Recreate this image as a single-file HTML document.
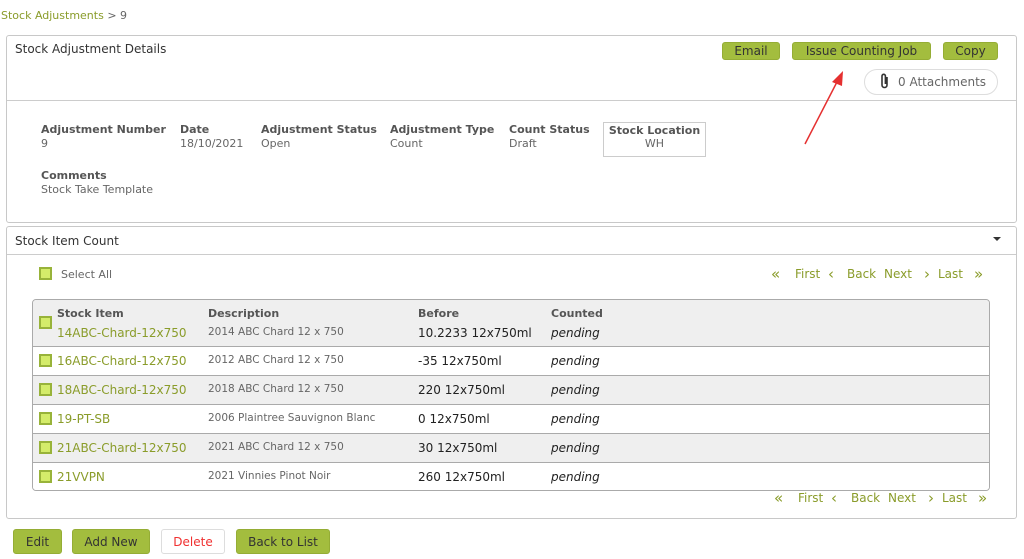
<!DOCTYPE html>
<html><head><style>
*{margin:0;padding:0;box-sizing:border-box}
body{width:1024px;height:559px;background:#fff;font-family:"DejaVu Sans","Liberation Sans",sans-serif;color:#555;position:relative;overflow:hidden}
.a{position:absolute;white-space:nowrap}
.panel{position:absolute;border:1px solid #c8c8c8;border-radius:3px;background:#fff}
.btn{position:absolute;background:#a3bd3e;border:1px solid #95ad35;border-radius:3px;color:#333;font-size:12px;text-align:center}
.lbl{font-size:11px;font-weight:bold;color:#555}
.val{font-size:11px;color:#666}
.cb{position:absolute;width:13px;height:13px;background:#d4ec6a;border:2px solid #98b33a}
.row{position:absolute;left:0;width:956px;height:29px;border-top:1px solid #aaa}
.it{font-size:12px;color:#8a9c2a}
.ds{font-size:10.5px;color:#666}
.bf{font-size:12px;color:#222}
.ct{font-size:12px;color:#222;font-style:italic}
.pg{position:absolute;font-size:12px;color:#8a9c2a;white-space:nowrap}
.ch{font-size:15px;line-height:12px}
</style></head><body>
<div class="a" style="left:1px;top:9px;font-size:11px;color:#8a9c2a">Stock Adjustments <span style="color:#666">&gt; 9</span></div>

<div class="panel" style="left:6px;top:35px;width:1011px;height:188px">
 <div class="a" style="left:8px;top:6px;font-size:12px;color:#333">Stock Adjustment Details</div>
 <div style="position:absolute;left:0;top:64px;width:100%;border-top:1px solid #ccc"></div>
</div>
<div class="btn" style="left:722px;top:42px;width:58px;height:18px;line-height:16px">Email</div>
<div class="btn" style="left:792px;top:42px;width:139px;height:18px;line-height:16px">Issue Counting Job</div>
<div class="btn" style="left:943px;top:42px;width:55px;height:18px;line-height:16px">Copy</div>
<div class="a" style="left:864px;top:69px;width:134px;height:26px;border:1px solid #ddd;border-radius:13px;font-size:12px;color:#666;line-height:24px;padding-left:33px">0 Attachments</div>
<svg class="a" style="left:878px;top:72px" width="14" height="18" viewBox="0 0 14 18"><path d="M9 5v8a2.5 2.5 0 0 1-5 0V4a1.7 1.7 0 0 1 3.4 0v8" fill="none" stroke="#333" stroke-width="1.6"/></svg>

<div class="a lbl" style="left:41px;top:123px">Adjustment Number</div><div class="a val" style="left:41px;top:137px">9</div>
<div class="a lbl" style="left:180px;top:123px">Date</div><div class="a val" style="left:180px;top:137px">18/10/2021</div>
<div class="a lbl" style="left:261px;top:123px">Adjustment Status</div><div class="a val" style="left:261px;top:137px">Open</div>
<div class="a lbl" style="left:390px;top:123px">Adjustment Type</div><div class="a val" style="left:390px;top:137px">Count</div>
<div class="a lbl" style="left:509px;top:123px">Count Status</div><div class="a val" style="left:509px;top:137px">Draft</div>
<div class="a" style="left:603px;top:122px;width:103px;height:35px;border:1px solid #ccc;text-align:center;padding-top:1px"><div class="lbl">Stock Location</div><div class="val">WH</div></div>
<div class="a lbl" style="left:41px;top:169px">Comments</div><div class="a val" style="left:41px;top:183px">Stock Take Template</div>

<svg class="a" style="left:800px;top:68px" width="50" height="80"><line x1="5" y1="76" x2="38" y2="12" stroke="#e53030" stroke-width="1.5"/><path d="M43 3 L32 14 L42 18 Z" fill="#e53030"/></svg>

<div class="panel" style="left:6px;top:226px;width:1011px;height:293px">
 <div class="a" style="left:8px;top:7px;font-size:12px;color:#333">Stock Item Count</div>
 <div class="a" style="left:986px;top:10px;width:0;height:0;border-left:4px solid transparent;border-right:4px solid transparent;border-top:4px solid #333"></div>
 <div style="position:absolute;left:0;top:27px;width:100%;border-top:1px solid #ccc"></div>
</div>
<div class="cb" style="left:39px;top:267px"></div>
<div class="a" style="left:61px;top:268px;font-size:11px;color:#666">Select All</div>

<div class="pg ch" style="left:771px;top:268px">«</div><div class="pg" style="left:795px;top:267px">First</div><div class="pg ch" style="left:828px;top:268px">‹</div><div class="pg" style="left:847px;top:267px">Back</div><div class="pg" style="left:884px;top:267px">Next</div><div class="pg ch" style="left:924px;top:268px">›</div><div class="pg" style="left:938px;top:267px">Last</div><div class="pg ch" style="left:974px;top:268px">»</div>

<div class="a" style="left:32px;top:299px;width:958px;height:192px;border:1px solid #aaa;border-radius:4px;overflow:hidden;background:#fff">
 <div class="row" style="top:0;height:47px;border-top:none;background:#efefef">
  <div class="a lbl" style="left:24px;top:7px">Stock Item</div>
  <div class="a lbl" style="left:175px;top:7px">Description</div>
  <div class="a lbl" style="left:385px;top:7px">Before</div>
  <div class="a lbl" style="left:518px;top:7px">Counted</div>
  <div class="cb" style="left:6px;top:16px"></div>
  <div class="a it" style="left:24px;top:26px">14ABC-Chard-12x750</div>
  <div class="a ds" style="left:175px;top:26px">2014 ABC Chard 12 x 750</div>
  <div class="a bf" style="left:385px;top:26px">10.2233 12x750ml</div>
  <div class="a ct" style="left:518px;top:26px">pending</div>
 </div>
 <div class="row" style="top:46px;background:#fff"><div class="cb" style="left:6px;top:7px"></div><div class="a it" style="left:24px;top:7px">16ABC-Chard-12x750</div><div class="a ds" style="left:175px;top:7px">2012 ABC Chard 12 x 750</div><div class="a bf" style="left:385px;top:7px">-35 12x750ml</div><div class="a ct" style="left:518px;top:7px">pending</div></div>
 <div class="row" style="top:75px;background:#efefef"><div class="cb" style="left:6px;top:7px"></div><div class="a it" style="left:24px;top:7px">18ABC-Chard-12x750</div><div class="a ds" style="left:175px;top:7px">2018 ABC Chard 12 x 750</div><div class="a bf" style="left:385px;top:7px">220 12x750ml</div><div class="a ct" style="left:518px;top:7px">pending</div></div>
 <div class="row" style="top:104px;background:#fff"><div class="cb" style="left:6px;top:7px"></div><div class="a it" style="left:24px;top:7px">19-PT-SB</div><div class="a ds" style="left:175px;top:7px">2006 Plaintree Sauvignon Blanc</div><div class="a bf" style="left:385px;top:7px">0 12x750ml</div><div class="a ct" style="left:518px;top:7px">pending</div></div>
 <div class="row" style="top:133px;background:#efefef"><div class="cb" style="left:6px;top:7px"></div><div class="a it" style="left:24px;top:7px">21ABC-Chard-12x750</div><div class="a ds" style="left:175px;top:7px">2021 ABC Chard 12 x 750</div><div class="a bf" style="left:385px;top:7px">30 12x750ml</div><div class="a ct" style="left:518px;top:7px">pending</div></div>
 <div class="row" style="top:162px;background:#fff"><div class="cb" style="left:6px;top:7px"></div><div class="a it" style="left:24px;top:7px">21VVPN</div><div class="a ds" style="left:175px;top:7px">2021 Vinnies Pinot Noir</div><div class="a bf" style="left:385px;top:7px">260 12x750ml</div><div class="a ct" style="left:518px;top:7px">pending</div></div>
</div>

<div class="pg ch" style="left:774px;top:492px">«</div><div class="pg" style="left:798px;top:491px">First</div><div class="pg ch" style="left:831px;top:492px">‹</div><div class="pg" style="left:851px;top:491px">Back</div><div class="pg" style="left:888px;top:491px">Next</div><div class="pg ch" style="left:928px;top:492px">›</div><div class="pg" style="left:942px;top:491px">Last</div><div class="pg ch" style="left:978px;top:492px">»</div>

<div class="btn" style="left:13px;top:529px;width:49px;height:25px;line-height:24px;font-size:12px">Edit</div>
<div class="btn" style="left:72px;top:529px;width:78px;height:25px;line-height:24px;font-size:12px">Add New</div>
<div class="btn" style="left:161px;top:529px;width:64px;height:25px;line-height:24px;font-size:12px;background:#fff;border-color:#ddd;color:#f03030">Delete</div>
<div class="btn" style="left:236px;top:529px;width:94px;height:25px;line-height:24px;font-size:12px">Back to List</div>
</body></html>
